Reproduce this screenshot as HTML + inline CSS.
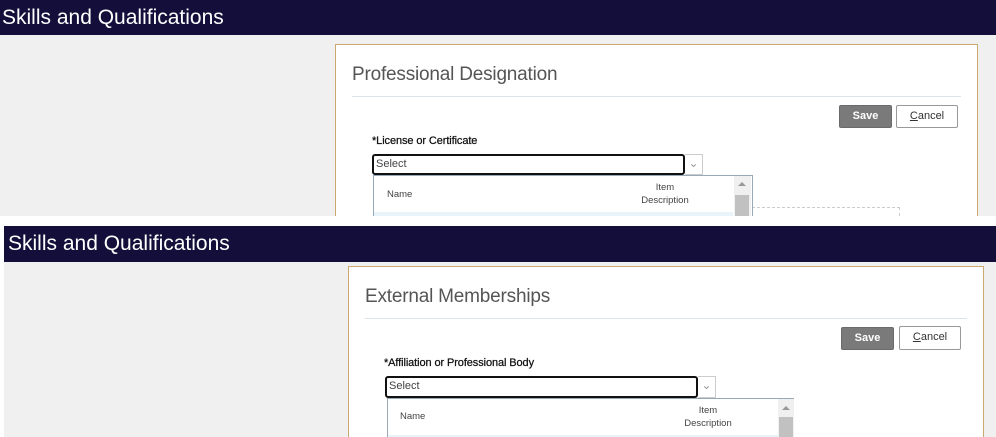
<!DOCTYPE html>
<html style="width:996px;height:437px;overflow:hidden"><head><meta charset="utf-8"><style>
*{margin:0;padding:0;box-sizing:border-box}
body{width:996px;height:437px;background:#fff;position:relative;overflow:hidden;font-family:"Liberation Sans",sans-serif}
.a{position:absolute}
.hdr{background:#140f3a;color:#fff;font-size:21px;line-height:36px}
.gray{background:#f0f0f0}
.card{background:#fff;border:1px solid #c9a96e;border-bottom:none}
.title{font-size:19px;color:#555;letter-spacing:-0.2px}
.div{height:1px;background:#dde3ea}
.save{background:#7a7a7a;border:1px solid #6a6a6a;color:#fff;font-size:11px;font-weight:bold;text-align:center;line-height:21px;border-radius:2px}
.cancel{background:#fff;border:1px solid #999;color:#333;font-size:11px;text-align:center;line-height:21px;border-radius:2px}
.lbl{font-size:11px;color:#111;letter-spacing:-0.1px;-webkit-text-stroke:0.25px #111}
.sel{border:2px solid #111;border-radius:3px;background:#fff;font-size:11px;color:#444;padding-left:2px;line-height:17px}
.chev{border:1px solid #ccc;border-left:none;background:#fff;color:#999;font-size:12px;text-align:center;line-height:16px}
.dd{border:1px solid #9aa9b8;border-bottom:none;background:#fff}
.sm{font-size:9.5px;color:#444;text-align:center;line-height:13px}
.sb{background:#f0f0f0}
.thumb{background:#c1c1c1}
.dash{border-top:1px dashed #ccc;border-right:1px dashed #ccc}
</style></head><body>
<!-- panel 1 -->
<div class="a gray" style="left:0;top:35px;width:996px;height:181px"></div>
<div class="a hdr" style="left:0;top:0;width:996px;height:35px;padding-left:2px">Skills and Qualifications</div>
<div class="a card" style="left:335px;top:44px;width:643px;height:172px"></div>
<div class="a title" style="left:352px;top:64px">Professional Designation</div>
<div class="a div" style="left:352px;top:96px;width:609px"></div>
<div class="a save" style="left:839px;top:105px;width:53px;height:23px">Save</div>
<div class="a cancel" style="left:896px;top:105px;width:62px;height:23px"><u>C</u>ancel</div>
<div class="a lbl" style="left:372px;top:135px">*License or Certificate</div>
<div class="a dash" style="left:752px;top:207px;width:148px;height:9px"></div>
<div class="a sel" style="left:372px;top:154px;width:313px;height:21px">Select</div>
<div class="a chev" style="left:685px;top:154px;width:18px;height:21px">&#8964;</div>
<div class="a dd" style="left:373px;top:175px;width:380px;height:41px"></div>
<div class="a sm" style="left:387px;top:188px;text-align:left">Name</div>
<div class="a sm" style="left:640px;top:181px;width:50px">Item<br>Description</div>
<div class="a" style="left:374px;top:212px;width:359px;height:4px;background:#e8f4fa"></div>
<div class="a sb" style="left:734px;top:176px;width:17px;height:40px"></div>
<div class="a" style="left:738px;top:182px;width:0;height:0;border-left:4px solid transparent;border-right:4px solid transparent;border-bottom:4px solid #999"></div>
<div class="a thumb" style="left:735px;top:195px;width:14px;height:21px"></div>
<!-- panel 2 -->
<div class="a gray" style="left:4px;top:262px;width:992px;height:175px"></div>
<div class="a hdr" style="left:4px;top:226px;width:992px;height:36px;padding-left:4px">Skills and Qualifications</div>
<div class="a card" style="left:348px;top:266px;width:636px;height:171px"></div>
<div class="a title" style="left:365px;top:286px">External Memberships</div>
<div class="a div" style="left:365px;top:318px;width:602px"></div>
<div class="a save" style="left:841px;top:327px;width:53px;height:23px">Save</div>
<div class="a cancel" style="left:899px;top:326px;width:62px;height:24px"><u>C</u>ancel</div>
<div class="a lbl" style="left:384px;top:357px">*Affiliation or Professional Body</div>
<div class="a sel" style="left:385px;top:376px;width:313px;height:22px">Select</div>
<div class="a chev" style="left:698px;top:376px;width:18px;height:22px">&#8964;</div>
<div class="a dd" style="left:387px;top:398px;width:407px;height:39px"></div>
<div class="a sm" style="left:400px;top:410px;text-align:left">Name</div>
<div class="a sm" style="left:683px;top:404px;width:50px">Item<br>Description</div>
<div class="a" style="left:388px;top:435px;width:390px;height:2px;background:#e8f4fa"></div>
<div class="a sb" style="left:778px;top:399px;width:16px;height:38px"></div>
<div class="a" style="left:782px;top:406px;width:0;height:0;border-left:4px solid transparent;border-right:4px solid transparent;border-bottom:4px solid #999"></div>
<div class="a thumb" style="left:779px;top:417px;width:14px;height:20px"></div>
</body></html>
